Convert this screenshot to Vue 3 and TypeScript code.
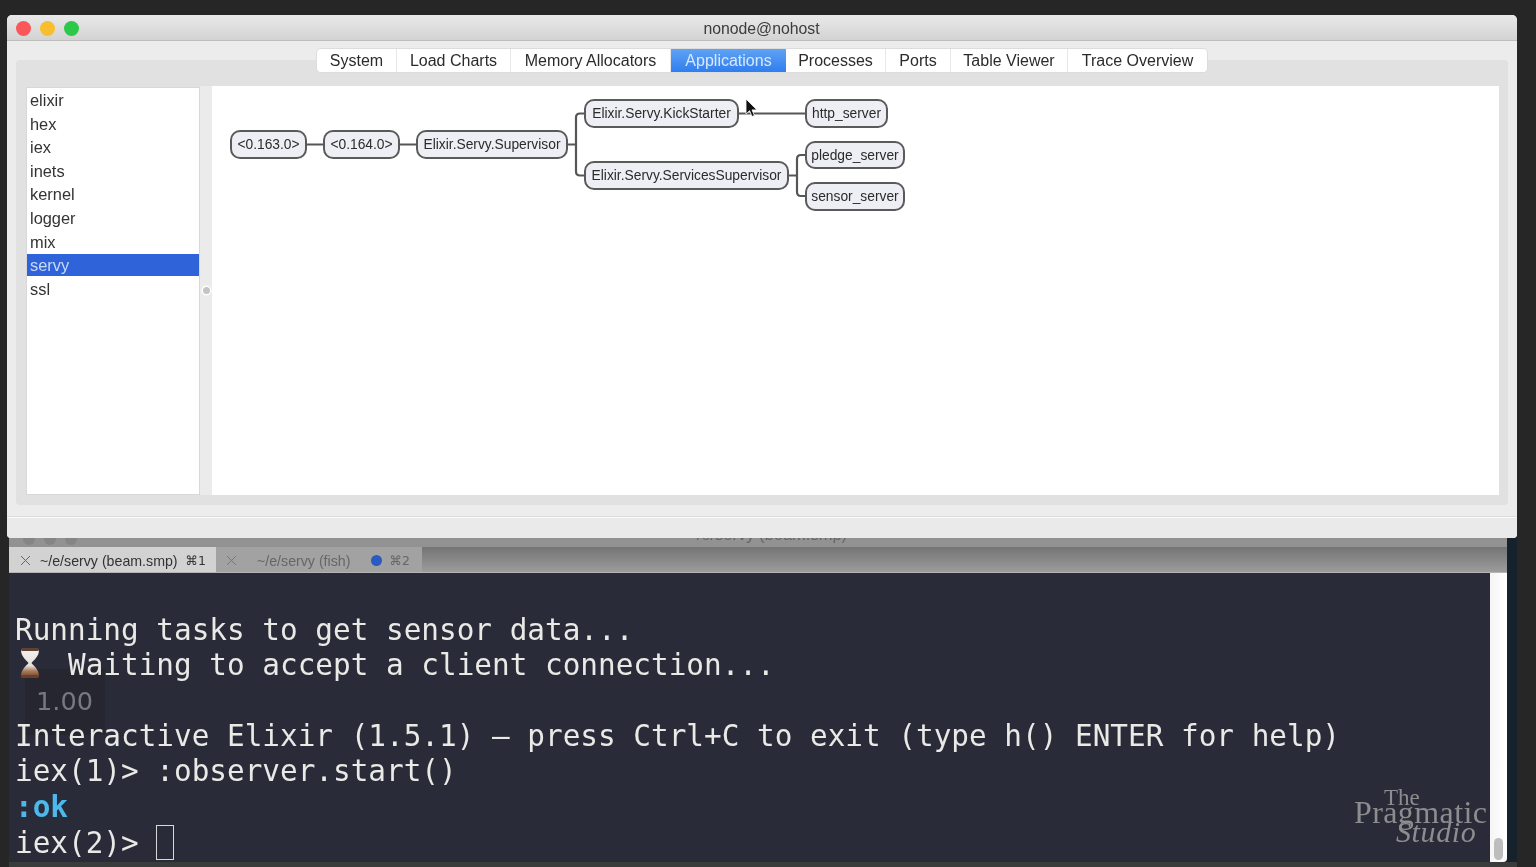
<script setup lang="ts">
interface TreeNode { label: string; x: number; y: number; w: number; h: number }
const tabs: { label: string; w: number; active?: boolean }[] = [
  { label: 'System', w: 80 },
  { label: 'Load Charts', w: 114 },
  { label: 'Memory Allocators', w: 160 },
  { label: 'Applications', w: 115, active: true },
  { label: 'Processes', w: 100 },
  { label: 'Ports', w: 65 },
  { label: 'Table Viewer', w: 117 },
  { label: 'Trace Overview', w: 139 },
]
const apps = ['elixir', 'hex', 'iex', 'inets', 'kernel', 'logger', 'mix', 'servy', 'ssl']
const nodes: TreeNode[] = [
  { label: '<0.163.0>', x: 18, y: 44, w: 77, h: 29 },
  { label: '<0.164.0>', x: 111, y: 44, w: 77, h: 29 },
  { label: 'Elixir.Servy.Supervisor', x: 204, y: 44, w: 152, h: 29 },
  { label: 'Elixir.Servy.KickStarter', x: 372, y: 13, w: 155, h: 29 },
  { label: 'http_server', x: 593, y: 13, w: 83, h: 29 },
  { label: 'Elixir.Servy.ServicesSupervisor', x: 372, y: 75, w: 205, h: 29 },
  { label: 'pledge_server', x: 593, y: 55, w: 100, h: 28 },
  { label: 'sensor_server', x: 593, y: 96, w: 100, h: 29 },
]
const links = [
  'M95 58.5H111',
  'M188 58.5H204',
  'M356 58.5H364',
  'M372 27.5H368Q364 27.5 364 31.5V85.5Q364 89.5 368 89.5H372',
  'M527 27.5H593',
  'M577 89.5H585',
  'M593 69H589Q585 69 585 73V106Q585 110 589 110H593',
]
const lines = [
  'Running tasks to get sensor data...',
  '   Waiting to accept a client connection...',
  ' ',
  'Interactive Elixir (1.5.1) – press Ctrl+C to exit (type h() ENTER for help)',
  'iex(1)> :observer.start()',
]
</script>

<template>
  <div class="screen">
    <section class="observer">
      <header class="titlebar">
        <div class="lights">
          <span class="light red"></span>
          <span class="light amber"></span>
          <span class="light green"></span>
        </div>
        <span class="title">nonode@nohost</span>
      </header>
      <div class="content">
        <div class="panel">
          <nav class="tabs">
            <span
              v-for="t in tabs"
              :key="t.label"
              class="tab"
              :class="{ active: t.active }"
              :style="{ width: t.w + 'px' }"
            >{{ t.label }}</span>
          </nav>
          <div class="split">
            <ul class="apps">
              <li v-for="a in apps" :key="a" :class="{ selected: a === 'servy' }">{{ a }}</li>
            </ul>
            <div class="sash"><span class="grip"></span></div>
            <div class="canvas">
              <svg class="links" width="1287" height="409" viewBox="0 0 1287 409" fill="none">
                <path v-for="d in links" :key="d" :d="d" stroke="#565656" stroke-width="2.2" />
              </svg>
              <div
                v-for="n in nodes"
                :key="n.label"
                class="node"
                :style="{ left: n.x + 'px', top: n.y + 'px', width: n.w + 'px', height: n.h + 'px' }"
              >{{ n.label }}</div>
              <svg class="pointer" width="13" height="20" viewBox="0 0 13 20">
                <path d="M1 1V16L4.6 12.7L7 18.5L9.4 17.4L7 11.9H12Z" fill="#111" stroke="#fff" stroke-width=".8" />
              </svg>
            </div>
          </div>
        </div>
        <div class="statusbar"></div>
      </div>
    </section>

    <section class="terminal">
      <div class="hidden-bar">
        <span class="ghost-dots"><i></i><i></i><i></i></span>
        <span class="ghost-title">× ~/e/servy (beam.smp)</span>
      </div>
      <div class="term-tabs">
        <div class="ttab on">
          <svg width="11" height="11" viewBox="0 0 11 11"><path d="M1 1L10 10M10 1L1 10" stroke="#666" stroke-width="1" /></svg>
          <span class="tname">~/e/servy (beam.smp)</span>
          <span class="tkey">⌘1</span>
        </div>
        <div class="ttab off">
          <svg width="11" height="11" viewBox="0 0 11 11"><path d="M1 1L10 10M10 1L1 10" stroke="#777" stroke-width="1" /></svg>
          <span class="tname">~/e/servy (fish)</span>
          <span class="dot"></span>
          <span class="tkey">⌘2</span>
        </div>
      </div>
      <div class="term-main">
        <div class="speed">1.00</div>
        <div class="term-text">
          <div v-for="(l, i) in lines" :key="i" class="tline">{{ l }}</div>
          <div class="tline"><b>:ok</b></div>
          <div class="tline">iex(2)&gt; <span class="cursor"></span></div>
          <svg class="hourglass" width="22" height="32" viewBox="0 0 22 32">
            <defs>
              <linearGradient id="sand" x1="0" y1="0" x2="0" y2="1">
                <stop offset="0" stop-color="#f3f0ec" />
                <stop offset=".6" stop-color="#e6e0da" />
                <stop offset=".8" stop-color="#a97f61" />
                <stop offset="1" stop-color="#7d4d30" />
              </linearGradient>
            </defs>
            <path d="M2 3H20C20 10 14 13.5 12.5 16C14 18.5 20 22 20 29H2C2 22 8 18.5 9.5 16C8 13.5 2 10 2 3Z" fill="url(#sand)" />
            <rect x="2" y="1" width="18" height="3" rx="1.5" fill="#5f4236" />
            <rect x="2" y="28" width="18" height="3" rx="1.5" fill="#6c3f26" />
          </svg>
        </div>
        <div class="brand">
          <span class="b1">The</span>
          <span class="b2">Pragmatic</span>
          <span class="b3">Studio</span>
        </div>
        <div class="scroll"><span class="thumb"></span></div>
      </div>
    </section>
  </div>
</template>

<style>
html, body { margin: 0; background: #252625; overflow: hidden; }
</style>

<style scoped>
.screen {
  width: 1536px;
  height: 867px;
  box-sizing: border-box;
  padding-top: 15px;
  background: #252625;
  overflow: hidden;
  position: relative;
  font-family: "Liberation Sans", Arial, sans-serif;
  filter: blur(.4px);
}
.observer {
  position: relative;
  z-index: 2;
  width: 1510px;
  height: 523px;
  margin-left: 7px;
  display: flex;
  flex-direction: column;
  border-radius: 5px 5px 4px 4px;
  overflow: hidden;
  background: #ececec;
}
.titlebar {
  height: 26px;
  flex: none;
  box-sizing: border-box;
  border-bottom: 1px solid #bdbdbd;
  background: linear-gradient(#e9e9e9, #d3d3d3);
  display: flex;
  align-items: center;
  justify-content: center;
  position: relative;
}
.lights { position: absolute; left: 9px; top: 6px; display: flex; gap: 9px; }
.light { width: 15px; height: 15px; border-radius: 50%; }
.red { background: #f9575a; }
.amber { background: #f9bd30; }
.green { background: #2cc84a; }
.title { font-size: 15.8px; color: #3b3b3b; margin-top: 2px; margin-right: 1px; }
.content { flex: 1; display: flex; flex-direction: column; min-height: 0; }
.panel {
  position: relative;
  margin: 19px 9px 0;
  height: 445px;
  box-sizing: border-box;
  background: #e1e1e1;
  border-radius: 4px;
  padding: 26px 9px 10px 10px;
}
.tabs {
  position: absolute;
  top: -11px;
  left: 301px;
  display: flex;
  height: 23px;
  border-radius: 4px;
  background: #fff;
  overflow: hidden;
  box-shadow: 0 0 0 1px #dcdcdc;
}
.tab {
  display: flex;
  align-items: center;
  justify-content: center;
  box-sizing: border-box;
  font-size: 16px;
  color: #2b2b2b;
  border-right: 1px solid #e8e8e8;
  white-space: nowrap;
}
.tab:last-child { border-right: 0; }
.tab.active {
  background: linear-gradient(#5fa3f3, #2f7ef0);
  color: #dbe8fb;
  border-right: 0;
}
.split { display: flex; height: 409px; }
.apps {
  width: 172px;
  height: 405px;
  margin: 1px 0 0;
  padding: 1px 0 0;
  list-style: none;
  background: #fff;
  border: 1px solid #d8d8d8;
  box-sizing: content-box;
  flex: none;
}
.apps li {
  height: 22px;
  margin-bottom: 1.6px;
  line-height: 22px;
  padding-left: 3px;
  font-size: 16.4px;
  color: #333;
}
.apps li.selected { background: #2e63d9; color: #c9d9f6; }
.sash {
  width: 12px;
  flex: none;
  background: #ebebeb;
  display: flex;
  align-items: center;
  justify-content: center;
}
.grip {
  width: 7px;
  height: 7px;
  border-radius: 50%;
  background: #c4c4c4;
  box-shadow: 0 0 0 1.5px #fff;
}
.canvas {
  width: 1287px;
  height: 409px;
  position: relative;
  background: #fff;
  flex: none;
}
.links { position: absolute; inset: 0; }
.node {
  position: absolute;
  box-sizing: border-box;
  border: 2px solid #5a5a5a;
  border-radius: 10px;
  background: #eeeef5;
  display: flex;
  align-items: center;
  justify-content: center;
  font-size: 13.8px;
  color: #2b2b2b;
  white-space: nowrap;
}
.pointer { position: absolute; left: 533px; top: 12px; }
.statusbar {
  margin-top: 11px;
  flex: 1;
  border-top: 1px solid #dcdcdc;
  background: #eaeaea;
  box-shadow: inset 0 1px 0 #fafafa;
}

.terminal {
  position: relative;
  z-index: 1;
  width: 1508px;
  height: 324px;
  margin-left: 9px;
  display: flex;
  flex-direction: column;
  background: #16222b;
  border-bottom: 5px solid #3a3b3b;
  box-sizing: content-box;
}
.hidden-bar {
  height: 9px;
  flex: none;
  background: #929292;
  position: relative;
  margin-right: 10px;
  overflow: hidden;
}
.ghost-dots { position: absolute; left: 14px; top: -5px; display: flex; gap: 9px; }
.ghost-dots i { width: 12px; height: 12px; border-radius: 50%; background: #858585; }
.ghost-title {
  position: absolute;
  left: 4px;
  right: 0;
  top: -13px;
  text-align: center;
  font-size: 16.5px;
  color: #666;
  white-space: nowrap;
}
.term-tabs {
  height: 25px;
  flex: none;
  margin-right: 10px;
  display: flex;
  background: linear-gradient(#747474, #9c9c9c);
  border-bottom: 1px solid #b5b5b5;
  box-sizing: content-box;
  font-size: 14.2px;
}
.ttab { display: flex; align-items: center; height: 100%; box-sizing: border-box; padding-top: 2px; }
.ttab.on { width: 207px; background: #d2d2d2; color: #333; padding-left: 11px; }
.ttab.off { width: 206px; background: #a2a2a2; color: #666; padding-left: 10px; }
.ttab.on .tname { margin-left: 9px; white-space: nowrap; }
.ttab.on .tkey { margin-left: 8px; }
.ttab.off .tname { margin-left: 20px; }
.tkey { font-family: "DejaVu Sans", sans-serif; font-size: 12.5px; white-space: nowrap; }
.ttab.off .tkey { margin-left: 7px; }
.dot { width: 11px; height: 11px; border-radius: 50%; background: #2a5bc0; margin-left: 21px; }
.term-main {
  flex: 1;
  display: flex;
  min-height: 0;
  position: relative;
  margin-right: 10px;
  background: #292b38;
}
.term-text {
  flex: 1;
  position: relative;
  padding: 39.6px 0 0 6px;
  font-family: "DejaVu Sans Mono", monospace;
  font-size: 29.35px;
  line-height: 35.4px;
  color: #e9e9e6;
  white-space: pre;
}
.tline { height: 35.4px; }
.tline b { color: #4db8ec; font-weight: 700; }
.cursor {
  display: inline-block;
  width: 16px;
  height: 33px;
  border: 1px solid #d8d8d8;
  vertical-align: -7px;
}
.hourglass { position: absolute; left: 10px; top: 74px; }
.speed {
  position: absolute;
  left: 16px;
  top: 96px;
  width: 80px;
  height: 66px;
  padding: 16px 0 0 11px;
  box-sizing: border-box;
  background: #252630;
  color: #777880;
  font-family: "DejaVu Sans", sans-serif;
  font-size: 25.6px;
  line-height: 32px;
}
.brand {
  position: absolute;
  left: 1345px;
  top: 212px;
  width: 134px;
  height: 62px;
  font-family: "Liberation Serif", serif;
  color: #8d8d90;
}
.brand span { position: absolute; white-space: nowrap; line-height: 1; }
.b1 { left: 30px; top: 1px; font-size: 23px; }
.b2 { left: 0; top: 11px; font-size: 32px; letter-spacing: .4px; }
.b3 { left: 42px; top: 32px; font-size: 30px; font-style: italic; letter-spacing: .6px; }
.scroll {
  width: 17px;
  flex: none;
  background: linear-gradient(90deg, #f5f5f5, #fff);
  position: relative;
  border-radius: 0 0 4px 0;
}
.thumb {
  position: absolute;
  left: 4px;
  bottom: 2px;
  width: 9px;
  height: 22px;
  border-radius: 5px;
  background: #bdbdbd;
}
</style>
